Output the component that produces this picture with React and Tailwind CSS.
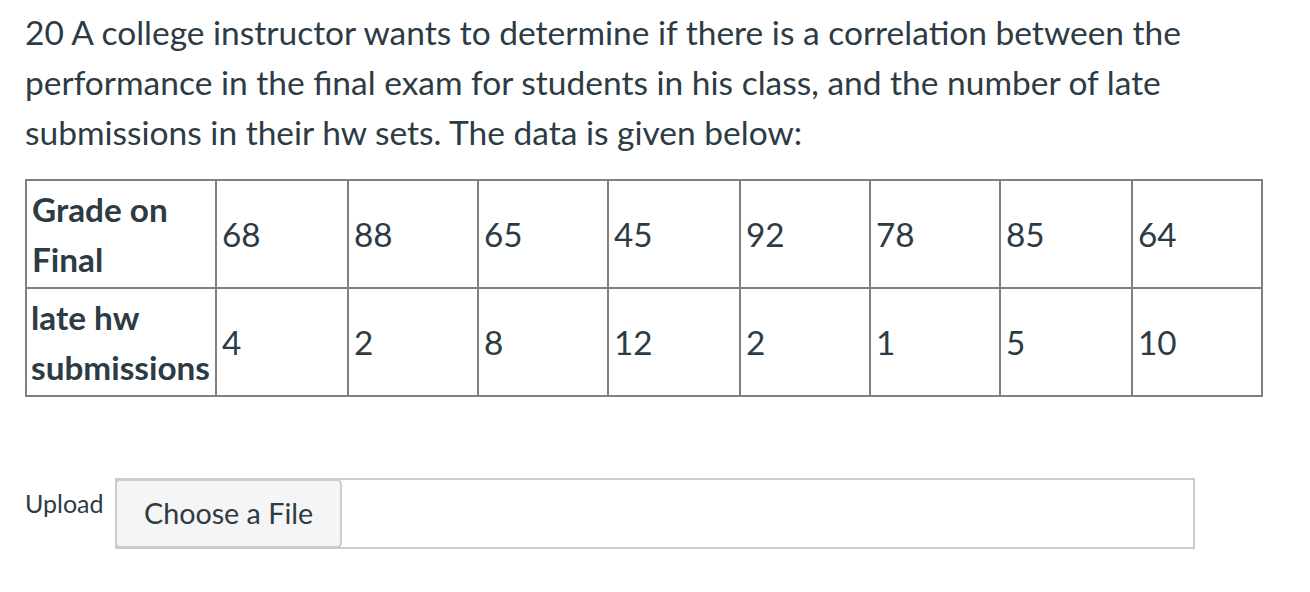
import React from 'react';

const grades = ['68', '88', '65', '45', '92', '78', '85', '64'];
const late = ['4', '2', '8', '12', '2', '1', '5', '10'];
const widths = [132, 130, 130, 132, 130, 130, 132, 130];

const App = () => {
  return (
    <div className="min-h-screen bg-white text-[#2d3b45] font-['Lato','Liberation_Sans',sans-serif] pl-[25px] pt-[7px]">
      <p className="text-[33.5px] leading-[50px] w-[1220px]">
        20 A college instructor wants to determine if there is a correlation between the performance in the final exam for students in his class, and the number of late submissions in their hw sets. The data is given below:
      </p>

      <table className="mt-[22px] border-collapse table-fixed text-[33.3px] leading-[50px] w-[1236px]">
        <colgroup>
          <col className="w-[190px]" />
          {widths.map((w, i) => (
            <col key={i} style={{ width: w }} />
          ))}
        </colgroup>
        <tbody>
          <tr className="h-[108px]">
            <td className="border-2 border-[#808080] px-[5px] font-bold align-middle">Grade on Final</td>
            {grades.map((g, i) => (
              <td key={i} className="border-2 border-[#808080] px-[5px] align-middle">{g}</td>
            ))}
          </tr>
          <tr className="h-[108px]">
            <td className="border-2 border-[#808080] px-[4px] font-bold align-middle whitespace-nowrap">late hw<br />submissions</td>
            {late.map((g, i) => (
              <td key={i} className="border-2 border-[#808080] px-[5px] align-middle">{g}</td>
            ))}
          </tr>
        </tbody>
      </table>

      <div className="mt-[81px] flex items-start">
        <span className="w-[90px] text-[25px] leading-[44px] pt-[3px]">Upload</span>
        <div className="w-[1080px] h-[71px] border-2 border-[#c7cdd1] flex items-center">
          <button className="h-[69px] -ml-[2px] px-[27px] bg-[#f5f5f5] border-2 border-[#c7cdd1] rounded-[5px] text-[28.7px] text-[#2d3b45]">
            Choose a File
          </button>
        </div>
      </div>
    </div>
  );
};

export default App;
